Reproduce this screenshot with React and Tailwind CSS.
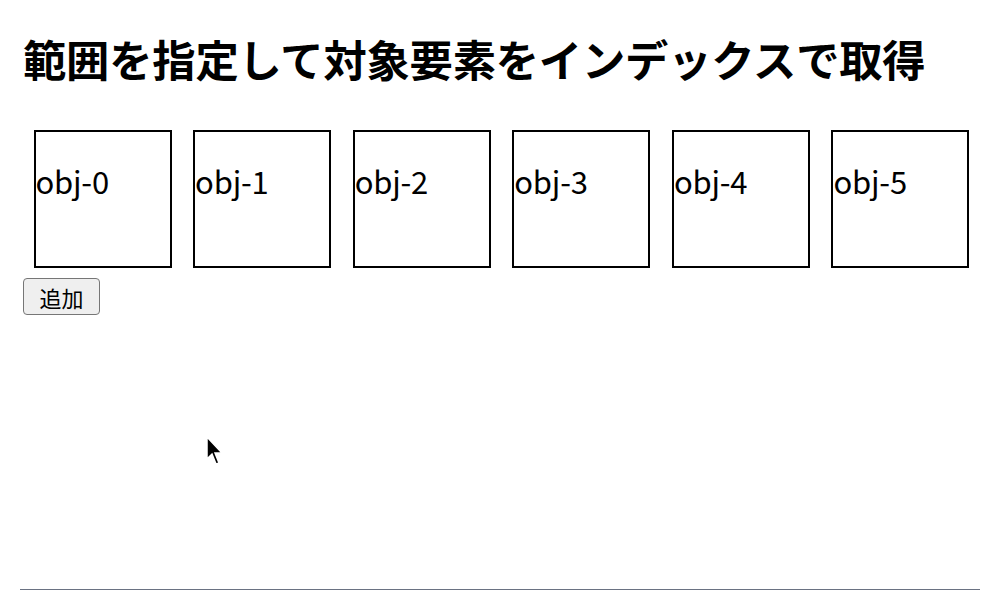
import React from "react";

const items = ["obj-0", "obj-1", "obj-2", "obj-3", "obj-4", "obj-5"];

export default function App() {
  return (
    <div className="relative w-[1000px] h-[590px] bg-white overflow-hidden font-['Noto_Sans_CJK_JP',sans-serif] text-black">
      <div className="px-[23px] pt-[30px]">
        <h1 className="text-[43.3px] font-bold leading-[56px] -tracking-[0.2px]">
          範囲を指定して対象要素をインデックスで取得
        </h1>
        <div className="flex gap-[21.6px] pl-[10.5px] mt-[44px]">
          {items.map((item) => (
            <div
              key={item}
              className="w-[138px] h-[138px] border-2 border-black pt-[27px] text-[31px] leading-[44px] -tracking-[0.2px]"
            >
              {item}
            </div>
          ))}
        </div>
        <button className="mt-[10px] h-[37px] w-[77px] rounded-[4px] border border-[#767676] bg-[#efefef] text-[22px] leading-none">
          追加
        </button>
      </div>
      <div className="absolute left-[20px] right-[20px] bottom-0 h-[1px] bg-gray-500"></div>
      <svg className="absolute left-[205px] top-[436px]" width="22" height="32" viewBox="0 0 22 32">
        <path d="M2 1 L2 23 L7 18 L11 28 L14 27 L10 17 L17 17 Z" fill="black" stroke="white" strokeWidth="1.5" />
      </svg>
    </div>
  );
}
